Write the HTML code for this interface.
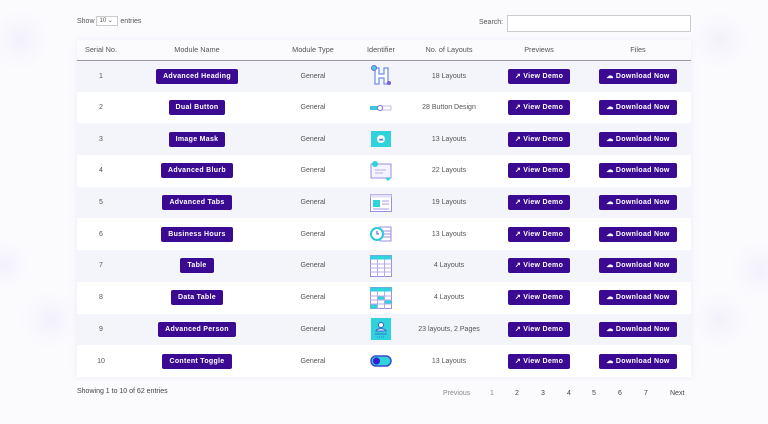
<!DOCTYPE html>
<html><head><meta charset="utf-8"><style>
*{margin:0;padding:0;box-sizing:border-box}
body{width:768px;height:424px;background:#fbfbfe;font-family:"Liberation Sans",sans-serif;color:#555;position:relative;overflow:hidden}
.blob{position:absolute;border-radius:50%;background:radial-gradient(circle,#f3f2fb 0%,rgba(246,246,252,0) 70%)}
.top{position:absolute;font-size:7px;color:#555}
table{position:absolute;left:77px;top:40px;width:614px;border-collapse:collapse;table-layout:fixed;background:#fff;box-shadow:0 0 6px rgba(200,200,230,.3)}
th{height:20px;font-weight:normal;font-size:7.3px;color:#555;border-bottom:1.5px solid #999;background:#fbfbfe}
td{height:31.7px;text-align:center;font-size:7px;color:#555}
tr:nth-child(even) td{background:#f4f4fb}
tr:nth-child(odd) td{background:#fff}
.b{display:inline-block;background:#3b0a92;color:#fff;font-weight:bold;font-size:7px;padding:0 7px;height:15px;line-height:15px;border-radius:2px;letter-spacing:.3px}
.pg{position:absolute;top:390px;font-size:7px;color:#444}
svg{vertical-align:middle}
</style></head><body>
<div class="blob" style="left:-10px;top:10px;width:60px;height:60px"></div>
<div class="blob" style="left:690px;top:10px;width:60px;height:60px"></div>
<div class="blob" style="left:730px;top:240px;width:60px;height:60px"></div>
<div class="blob" style="left:20px;top:290px;width:60px;height:60px"></div>
<div class="blob" style="left:690px;top:290px;width:60px;height:60px"></div>
<div class="blob" style="left:-20px;top:240px;width:50px;height:50px"></div>
<div class="top" style="left:77px;top:16px">Show <span style="display:inline-block;width:22px;height:10px;border:1px solid #ccc;background:#fff;font-size:6px;vertical-align:middle;padding-left:2px">10 ⌄</span> entries</div>
<div class="top" style="left:479px;top:19px">Search:</div>
<div style="position:absolute;left:507px;top:15px;width:184px;height:17px;border:1px solid #ccc;background:#fff"></div>
<table>
<colgroup><col style="width:48px"><col style="width:144px"><col style="width:88px"><col style="width:48px"><col style="width:88px"><col style="width:92px"><col style="width:106px"></colgroup>
<tr><th>Serial No.</th><th>Module Name</th><th>Module Type</th><th>Identifier</th><th>No. of Layouts</th><th>Previews</th><th>Files</th></tr>
<tr><td>1</td><td><span class="b">Advanced Heading</span></td><td>General</td><td><svg width="22" height="22" viewBox="0 0 22 22"><path d="M5 3h4v6h5V3h4v16h-4v-6H9v6H5z" fill="#fff" stroke="#6a8ee0" stroke-width="1.2"/><circle cx="4" cy="3" r="2.5" fill="#4ec6e6" stroke="#6a6ad0"/><circle cx="19" cy="18" r="2" fill="#7a5ee0"/></svg></td><td>18 Layouts</td><td><span class="b">↗ View Demo</span></td><td><span class="b">☁ Download Now</span></td></tr>
<tr><td>2</td><td><span class="b">Dual Button</span></td><td>General</td><td><svg width="22" height="8" viewBox="0 0 22 8"><rect x="0" y="2" width="10" height="4" fill="#3cc6e0"/><rect x="10" y="2" width="11" height="4" fill="#fff" stroke="#b8a8e8" stroke-width=".8"/><circle cx="10" cy="4" r="2.5" fill="#fff" stroke="#7a6ad8"/></svg></td><td>28 Button Design</td><td><span class="b">↗ View Demo</span></td><td><span class="b">☁ Download Now</span></td></tr>
<tr><td>3</td><td><span class="b">Image Mask</span></td><td>General</td><td><svg width="20" height="16" viewBox="0 0 20 16"><rect width="20" height="16" fill="#2ed3dc"/><circle cx="10" cy="8" r="4" fill="#fff"/><path d="M7.5 9.5l1.5-2 1 1 1-1.5 1.5 2.5z" fill="#4a6ad0"/></svg></td><td>13 Layouts</td><td><span class="b">↗ View Demo</span></td><td><span class="b">☁ Download Now</span></td></tr>
<tr><td>4</td><td><span class="b">Advanced Blurb</span></td><td>General</td><td><svg width="22" height="22" viewBox="0 0 22 22"><rect x="1" y="4" width="20" height="14" fill="#f4f3ff" stroke="#9a8ee0"/><line x1="5" y1="10" x2="16" y2="10" stroke="#b8b0e8"/><line x1="5" y1="13" x2="13" y2="13" stroke="#b8b0e8"/><circle cx="5" cy="4" r="3" fill="#2ed3dc"/><path d="M15 18l3 3 3-3z" fill="#2ed3dc"/></svg></td><td>22 Layouts</td><td><span class="b">↗ View Demo</span></td><td><span class="b">☁ Download Now</span></td></tr>
<tr><td>5</td><td><span class="b">Advanced Tabs</span></td><td>General</td><td><svg width="22" height="18" viewBox="0 0 22 18"><rect x="0.5" y="0.5" width="21" height="17" fill="#fff" stroke="#9a8ee0"/><rect x="0.5" y="0.5" width="21" height="3" fill="#e4e0fb"/><rect x="3" y="6" width="7" height="7" fill="#2ed3dc"/><line x1="12" y1="7" x2="19" y2="7" stroke="#a898e0"/><line x1="12" y1="10" x2="19" y2="10" stroke="#a898e0"/><line x1="3" y1="15" x2="19" y2="15" stroke="#a898e0"/></svg></td><td>19 Layouts</td><td><span class="b">↗ View Demo</span></td><td><span class="b">☁ Download Now</span></td></tr>
<tr><td>6</td><td><span class="b">Business Hours</span></td><td>General</td><td><svg width="22" height="16" viewBox="0 0 22 16"><rect x="10" y="1" width="11" height="14" fill="#fff" stroke="#9a8ee0"/><line x1="10" y1="5" x2="21" y2="5" stroke="#9a8ee0"/><line x1="10" y1="8" x2="21" y2="8" stroke="#9a8ee0"/><line x1="10" y1="11" x2="21" y2="11" stroke="#9a8ee0"/><circle cx="7" cy="8" r="6" fill="#fff" stroke="#2ec6e0" stroke-width="2"/><path d="M7 5v3h2" stroke="#3a5ad0" fill="none"/></svg></td><td>13 Layouts</td><td><span class="b">↗ View Demo</span></td><td><span class="b">☁ Download Now</span></td></tr>
<tr><td>7</td><td><span class="b">Table</span></td><td>General</td><td><svg width="22" height="22" viewBox="0 0 22 22"><rect x="0.5" y="0.5" width="21" height="21" fill="#fff" stroke="#9a8ee0"/><rect x="0.5" y="0.5" width="21" height="4" fill="#2ed3dc"/><path d="M0 9h22M0 13h22M0 17h22M7.5 4v18M14.5 4v18" stroke="#b8a8e8"/></svg></td><td>4 Layouts</td><td><span class="b">↗ View Demo</span></td><td><span class="b">☁ Download Now</span></td></tr>
<tr><td>8</td><td><span class="b">Data Table</span></td><td>General</td><td><svg width="22" height="22" viewBox="0 0 22 22"><rect x="0.5" y="0.5" width="21" height="21" fill="#fff" stroke="#9a8ee0"/><rect x="0.5" y="0.5" width="21" height="4" fill="#2ed3dc"/><rect x="7.5" y="9" width="7" height="4" fill="#2ed3dc"/><rect x="0.5" y="17" width="7" height="4.5" fill="#2ed3dc"/><rect x="14.5" y="13" width="7" height="4" fill="#2ed3dc"/><path d="M0 9h22M0 13h22M0 17h22M7.5 4v18M14.5 4v18" stroke="#b8a8e8"/></svg></td><td>4 Layouts</td><td><span class="b">↗ View Demo</span></td><td><span class="b">☁ Download Now</span></td></tr>
<tr><td>9</td><td><span class="b">Advanced Person</span></td><td>General</td><td><svg width="20" height="22" viewBox="0 0 20 22"><rect width="20" height="22" fill="#2ed3dc"/><circle cx="10" cy="7" r="2.5" fill="#fff" stroke="#3a5ad0"/><path d="M5 13c1-3 9-3 10 0z" fill="#fff" stroke="#3a5ad0"/><line x1="4" y1="16" x2="16" y2="16" stroke="#3a5ad0" stroke-width=".8"/><line x1="6" y1="19" x2="14" y2="19" stroke="#3a5ad0" stroke-width=".8" stroke-dasharray="1 1"/></svg></td><td>23 layouts, 2 Pages</td><td><span class="b">↗ View Demo</span></td><td><span class="b">☁ Download Now</span></td></tr>
<tr><td>10</td><td><span class="b">Content Toggle</span></td><td>General</td><td><svg width="22" height="12" viewBox="0 0 22 12"><rect x="1" y="1" width="20" height="10" rx="5" fill="#2ed3dc" stroke="#3a4ad0" stroke-width="1.5"/><circle cx="6.5" cy="6" r="3.5" fill="#3a1ad0"/></svg></td><td>13 Layouts</td><td><span class="b">↗ View Demo</span></td><td><span class="b">☁ Download Now</span></td></tr>
</table>
<div class="pg" style="left:77px;top:388px">Showing 1 to 10 of 62 entries</div>
<div class="pg" style="left:443px;color:#888">Previous</div>
<div class="pg" style="left:490px;color:#888">1</div>
<div class="pg" style="left:515px">2</div>
<div class="pg" style="left:541px">3</div>
<div class="pg" style="left:567px">4</div>
<div class="pg" style="left:592px">5</div>
<div class="pg" style="left:618px">6</div>
<div class="pg" style="left:644px">7</div>
<div class="pg" style="left:670px">Next</div>
</body></html>
